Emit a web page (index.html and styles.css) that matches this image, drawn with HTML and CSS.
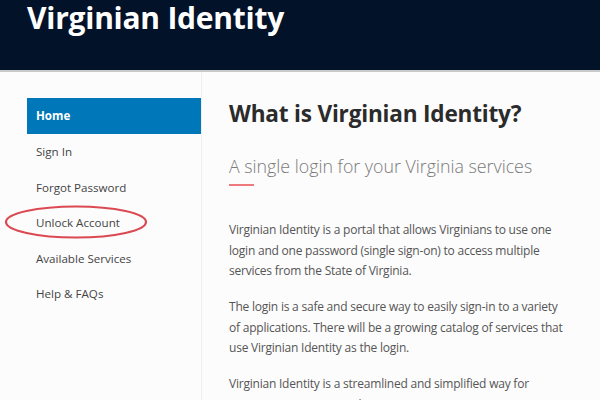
FILE: index.html
```html
<!DOCTYPE html>
<html lang="en">
<head>
<meta charset="utf-8">
<title>Virginian Identity</title>
<link rel="stylesheet" href="styles.css">
</head>
<body>
<header class="site-header">
  <h1 class="site-title">Virginian Identity</h1>
</header>
<div class="layout">
  <nav class="sidebar">
    <a class="nav-item active" href="#">Home</a>
    <a class="nav-item" href="#">Sign In</a>
    <a class="nav-item" href="#">Forgot Password</a>
    <a class="nav-item highlighted" href="#">Unlock Account
      <svg class="circle-mark" viewBox="0 0 146 34" aria-hidden="true"><ellipse cx="73" cy="17" rx="70" ry="15.5" fill="none" stroke="#db4a52" stroke-width="2.2"/></svg>
    </a>
    <a class="nav-item" href="#">Available Services</a>
    <a class="nav-item" href="#">Help &amp; FAQs</a>
  </nav>
  <main class="content">
    <h2 class="page-title">What is Virginian Identity?</h2>
    <p class="lead">A single login for your Virginia services</p>
    <div class="lead-rule"></div>
    <p class="text">Virginian Identity is a portal that allows Virginians to use one login and one password (single sign-on) to access multiple services from the State of Virginia.</p>
    <p class="text">The login is a safe and secure way to easily sign-in to a variety of applications. There will be a growing catalog of services that use Virginian Identity as the login.</p>
    <p class="text">Virginian Identity is a streamlined and simplified way for Virginians to interact with state government services.</p>
  </main>
</div>
</body>
</html>
```
FILE: styles.css
```css
html, body {
  margin: 0;
  padding: 0;
  background: #fcfcfc;
  font-family: "Open Sans", "Noto Sans", sans-serif;
  overflow: hidden;
  height: 400px;
}
.site-header {
  background: #011229;
  height: 72px;
  border-bottom: 2px solid #c9c9c9;
  box-sizing: border-box;
  padding-left: 27px;
}
.site-title {
  margin: 0;
  color: #ffffff;
  font-size: 30px;
  font-weight: 700;
  line-height: 36px;
  letter-spacing: -0.25px;
}
.layout {
  display: flex;
  padding-left: 27px;
  height: 328px;
}
.sidebar {
  width: 174px;
  flex: none;
  border-right: 1px solid #efefef;
  padding-top: 26px;
  display: flex;
  flex-direction: column;
}
.nav-item {
  position: relative;
  display: block;
  height: 35.5px;
  line-height: 35px;
  padding-left: 9px;
  font-size: 11.6px;
  color: #444;
  text-decoration: none;
}
.nav-item.active {
  background: #0077b8;
  color: #fff;
  font-weight: 700;
  height: 36px;
  line-height: 36px;
}
.circle-mark {
  position: absolute;
  left: -24px;
  top: 0;
  width: 146px;
  height: 34px;
}
.content {
  padding-left: 27px;
  padding-top: 26px;
  width: 338px;
}
.page-title {
  margin: 0;
  font-size: 22.6px;
  font-weight: 700;
  color: #2b2b2b;
  line-height: 32px;
  letter-spacing: -0.2px;
  white-space: nowrap;
}
.lead {
  margin: 23px 0 0;
  font-size: 17.8px;
  font-weight: 300;
  color: #7a7a7a;
  line-height: 26px;
  white-space: nowrap;
}
.lead-rule {
  width: 25px;
  height: 2px;
  background: #ee7a7e;
  margin-top: 5px;
}
.text {
  margin: 34px 0 0;
  font-size: 12px;
  letter-spacing: -0.22px;
  line-height: 20.5px;
  color: #555;
}
.text + .text {
  margin-top: 15.5px;
}
```
